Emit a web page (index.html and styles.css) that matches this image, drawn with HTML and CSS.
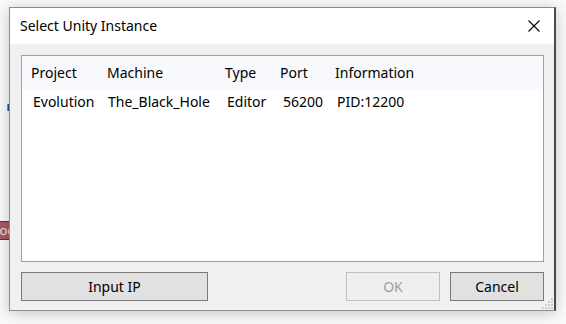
FILE: index.html
```html
<!DOCTYPE html>
<html>
<head>
<meta charset="utf-8">
<link rel="stylesheet" href="styles.css">
</head>
<body>
<div class="desk-mark"></div>
<div class="desk-tab">Doc</div>
<div class="dialog">
  <div class="titlebar">
    <span class="title">Select Unity Instance</span>
    <svg class="close" width="12" height="12" viewBox="0 0 12 12"><path d="M0.5 0.5 L11.5 11.5 M11.5 0.5 L0.5 11.5" stroke="#000" stroke-width="1.1" fill="none"/></svg>
  </div>
  <div class="body">
    <div class="list">
      <div class="row head">
        <span>Project</span><span>Machine</span><span>Type</span><span>Port</span><span>Information</span>
      </div>
      <div class="row item">
        <span>Evolution</span><span>The_Black_Hole</span><span>Editor</span><span>56200</span><span>PID:12200</span>
      </div>
    </div>
    <div class="buttons">
      <button class="btn wide">Input IP</button>
      <span class="spacer"></span>
      <button class="btn disabled">OK</button>
      <button class="btn">Cancel</button>
    </div>
    <svg class="grip" width="12" height="12" viewBox="0 0 12 12">
      <g fill="#c9ced8">
        <rect x="10" y="1" width="2" height="2"/>
        <rect x="7" y="4" width="2" height="2"/><rect x="10" y="4" width="2" height="2"/>
        <rect x="4" y="7" width="2" height="2"/><rect x="7" y="7" width="2" height="2"/><rect x="10" y="7" width="2" height="2"/>
        <rect x="1" y="10" width="2" height="2"/><rect x="4" y="10" width="2" height="2"/><rect x="7" y="10" width="2" height="2"/><rect x="10" y="10" width="2" height="2"/>
      </g>
    </svg>
  </div>
</div>
</body>
</html>
```
FILE: styles.css
```css
html, body {
  margin: 0;
  padding: 0;
}
body {
  width: 566px;
  height: 324px;
  background: #fafafa;
  position: relative;
  overflow: hidden;
  font-family: "Noto Sans", "Open Sans", sans-serif;
  color: #000;
}
.desk-mark {
  position: absolute;
  left: 7px;
  top: 104px;
  width: 2px;
  height: 7px;
  background: #2a4f8f;
  border-left: 1px solid #d08030;
}
.desk-tab {
  position: absolute;
  left: -12px;
  top: 221px;
  width: 20px;
  height: 17px;
  background: #a65a5e;
  border-top: 1px solid #2a2ae0;
  border-bottom: 1px solid #2a2ae0;
  color: #f4dede;
  font-size: 13px;
  line-height: 17px;
  padding-left: 2px;
}
.dialog {
  position: absolute;
  left: 9px;
  top: 7px;
  width: 547px;
  height: 304px;
  box-sizing: border-box;
  border: 1px solid #8c8c8c;
  border-right: 2px solid #4a4a4a;
  background: #f0f0f0;
  box-shadow: 0 2px 14px rgba(0, 0, 0, 0.22);
  display: flex;
  flex-direction: column;
}
.titlebar {
  height: 36px;
  background: #fff;
  display: flex;
  align-items: center;
  padding: 0 13px 0 10px;
  flex: none;
}
.title {
  flex: 1;
  font-size: 14px;
  margin-top: -1px;
}
.close {
  display: block;
  margin-right: 1px;
}
.body {
  flex: 1;
  position: relative;
  padding: 11px 10px 10px 11px;
  display: flex;
  flex-direction: column;
  gap: 10px;
}
.list {
  height: 207px;
  box-sizing: border-box;
  border: 1px solid #a0a0a0;
  background: #fff;
  flex: none;
}
.row {
  display: grid;
  grid-template-columns: 76px 118px 55px 55px 1fr;
  font-size: 14px;
  align-items: center;
}
.row span { white-space: nowrap; }
.head {
  height: 33px;
  background: #f7f9fc;
  padding-left: 9px;
}
.item {
  height: 25px;
  padding-left: 11px;
}
.item span:nth-child(2) { margin-left: -1px; }
.item span:nth-child(4) { margin-left: 1px; }
.buttons {
  display: flex;
  gap: 10px;
  height: 29px;
}
.spacer { flex: 1; }
.btn {
  font-family: inherit;
  font-size: 14px;
  color: #000;
  background: #e1e1e1;
  border: 1px solid #7a7a7a;
  border-radius: 0;
  width: 94px;
  height: 29px;
  padding: 0;
  margin: 0;
}
.btn.wide { width: 187px; }
.btn.disabled {
  background: #efefef;
  border-color: #c0c0c0;
  color: #9e9e9e;
}
.grip {
  position: absolute;
  right: 1px;
  bottom: 2px;
}
```
